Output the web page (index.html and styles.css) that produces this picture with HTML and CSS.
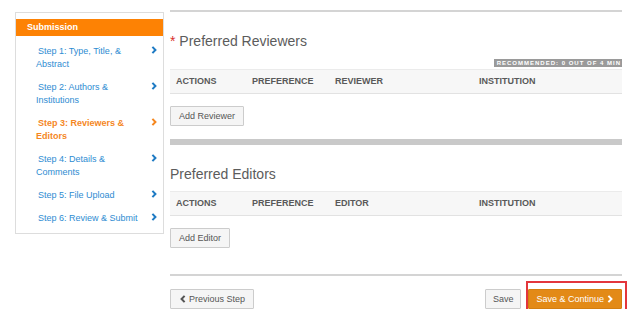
FILE: index.html
```html
<!DOCTYPE html>
<html lang="en">
<head>
    <meta charset="UTF-8">
    <title>Submission - Reviewers &amp; Editors</title>
    <link rel="stylesheet" href="styles.css">
</head>
<body>
    <div class="page">
        <!-- Step navigation -->
        <aside class="sidebar">
            <div class="sidebar-title">Submission</div>
            <ul class="steps">
                <li class="step">
                    <span class="step-text">Step 1: Type, Title, &amp; Abstract</span>
                    <svg class="chev" viewBox="0 0 6 9"><path d="M1.2 1 L4.6 4.5 L1.2 8"/></svg>
                </li>
                <li class="step">
                    <span class="step-text">Step 2: Authors &amp; Institutions</span>
                    <svg class="chev" viewBox="0 0 6 9"><path d="M1.2 1 L4.6 4.5 L1.2 8"/></svg>
                </li>
                <li class="step current">
                    <span class="step-text">Step 3: Reviewers &amp; Editors</span>
                    <svg class="chev" viewBox="0 0 6 9"><path d="M1.2 1 L4.6 4.5 L1.2 8"/></svg>
                </li>
                <li class="step">
                    <span class="step-text">Step 4: Details &amp; Comments</span>
                    <svg class="chev" viewBox="0 0 6 9"><path d="M1.2 1 L4.6 4.5 L1.2 8"/></svg>
                </li>
                <li class="step">
                    <span class="step-text">Step 5: File Upload</span>
                    <svg class="chev" viewBox="0 0 6 9"><path d="M1.2 1 L4.6 4.5 L1.2 8"/></svg>
                </li>
                <li class="step">
                    <span class="step-text">Step 6: Review &amp; Submit</span>
                    <svg class="chev" viewBox="0 0 6 9"><path d="M1.2 1 L4.6 4.5 L1.2 8"/></svg>
                </li>
            </ul>
        </aside>

        <main class="content">
            <div class="rule"></div>

            <!-- Reviewers -->
            <h2 class="block-title"><span class="req">*</span> Preferred Reviewers</h2>
            <div class="badge-row"><span class="badge">RECOMMENDED: 0 OUT OF 4 MIN</span></div>
            <div class="table-head">
                <span>ACTIONS</span>
                <span>PREFERENCE</span>
                <span>REVIEWER</span>
                <span>INSTITUTION</span>
            </div>
            <button class="btn add-btn">Add Reviewer</button>

            <div class="divider"></div>

            <!-- Editors -->
            <h2 class="block-title editors-title">Preferred Editors</h2>
            <div class="table-head editors-head">
                <span>ACTIONS</span>
                <span>PREFERENCE</span>
                <span>EDITOR</span>
                <span>INSTITUTION</span>
            </div>
            <button class="btn add-btn">Add Editor</button>

            <div class="rule rule-bottom"></div>

            <div class="footer">
                <button class="btn prev-btn">
                    <svg class="chev-left" viewBox="0 0 6 9"><path d="M4.8 1 L1.4 4.5 L4.8 8"/></svg>
                    Previous Step
                </button>
                <div class="footer-right">
                    <button class="btn">Save</button>
                    <div class="highlight">
                        <button class="btn btn-primary">
                            Save &amp; Continue
                            <svg class="chev-next" viewBox="0 0 6 9"><path d="M1.2 1 L4.6 4.5 L1.2 8"/></svg>
                        </button>
                    </div>
                </div>
            </div>
        </main>
    </div>
</body>
</html>
```

FILE: styles.css
```css
body {
    margin: 0;
    background: #ffffff;
    font-family: "Liberation Sans", Arial, sans-serif;
    font-size: 9px;
    color: #555555;
}

.page {
    display: flex;
    align-items: flex-start;
    gap: 6px;
    padding-left: 15px;
}

/* sidebar */
.sidebar {
    width: 147px;
    margin-top: 12px;
    padding: 6px 0 3px;
    border: 1px solid #dddddd;
}
.sidebar-title {
    height: 17px;
    line-height: 17px;
    padding-left: 11px;
    background: #fd8204;
    color: #ffffff;
    font-weight: bold;
}
.steps {
    list-style: none;
    margin: 4px 0 0;
    padding: 0;
}
.step {
    display: flex;
    align-items: flex-start;
    gap: 7px;
    padding: 5px 6px 5px 20px;
    line-height: 13px;
    color: #2e8cd2;
}
.step-text {
    flex: 1;
    text-indent: 2px;
}
.step.current {
    color: #f5871f;
    font-weight: bold;
}
.chev {
    width: 6px;
    height: 8px;
    margin-top: 1px;
    fill: none;
    stroke: #1f7bc4;
    stroke-width: 2.3;
}
.step.current .chev {
    stroke: #f5871f;
}

/* main column */
.content {
    width: 452px;
    margin-top: 10px;
}
.rule {
    height: 2px;
    background: #d4d4d4;
}
.block-title {
    margin: 21px 0 0;
    font-size: 14px;
    line-height: 16px;
    font-weight: normal;
    color: #5c5c5c;
}
.req {
    color: #d9302c;
}
.badge-row {
    display: flex;
    justify-content: flex-end;
    margin-top: 10px;
}
.badge {
    height: 8px;
    line-height: 8px;
    padding: 0 1px 0 3px;
    background: #9a9a9a;
    color: #ffffff;
    font-size: 6px;
    font-weight: bold;
    letter-spacing: 1px;
}
.table-head {
    display: grid;
    grid-template-columns: 76px 83px 144px 1fr;
    height: 23px;
    line-height: 23px;
    margin-top: 2px;
    padding-left: 6px;
    background: #f7f7f7;
    border-top: 1px solid #ebebeb;
    border-bottom: 1px solid #e2e2e2;
    font-weight: bold;
    color: #595959;
}
.editors-title {
    margin-top: 21px;
}
.editors-head {
    margin-top: 9px;
}

.btn {
    display: inline-flex;
    align-items: center;
    box-sizing: border-box;
    height: 20px;
    padding: 0 8px;
    border: 1px solid #cccccc;
    border-radius: 1px;
    background: #f5f5f5;
    font-family: inherit;
    font-size: 9px;
    color: #555555;
}
.add-btn {
    display: flex;
    margin-top: 12px;
}
.divider {
    height: 6px;
    margin-top: 13px;
    background: #c9c9c9;
}
.rule-bottom {
    margin-top: 26px;
}

/* footer */
.footer {
    display: flex;
    align-items: flex-start;
    justify-content: space-between;
    margin-top: 13px;
}
.prev-btn {
    gap: 3px;
    padding: 0 8px 0 9px;
}
.chev-left,
.chev-next {
    width: 6px;
    height: 8px;
    fill: none;
    stroke: currentColor;
    stroke-width: 2.3;
}
.footer-right {
    display: flex;
    align-items: flex-start;
    gap: 7px;
}
.footer-right .btn {
    padding: 0 7px;
}
.footer-right .btn-primary {
    gap: 3px;
    padding: 0 8px 0 7px;
    background: #e38a17;
    border-color: #d47e10;
    color: #ffffff;
}
.highlight {
    display: flex;
    position: relative;
}
/* red annotation box round the main action */
.highlight::after {
    content: "";
    position: absolute;
    top: -8px;
    left: -2px;
    right: -5px;
    bottom: -4px;
    border: 2px solid #e3363c;
    box-sizing: border-box;
}
```
